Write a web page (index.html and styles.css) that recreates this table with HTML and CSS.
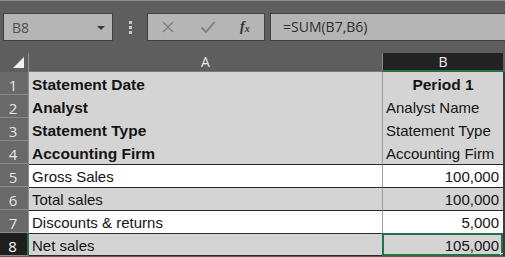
FILE: index.html
```html
<!DOCTYPE html>
<html lang="en">
<head>
<meta charset="utf-8">
<title>Income statement</title>
<link rel="stylesheet" href="styles.css">
</head>
<body>
<div class="app">
  <div class="formula-bar">
    <div class="name-box">
      <span class="name-text">B8</span>
      <span class="caret"></span>
    </div>
    <div class="grip"><i></i><i></i><i></i></div>
    <div class="fx-buttons">
      <svg class="btn-icon" width="14" height="14" viewBox="0 0 14 14"><path d="M2 2 L12 12 M12 2 L2 12" stroke="#7d7d7d" stroke-width="1.4" fill="none"/></svg>
      <svg class="btn-icon" width="16" height="14" viewBox="0 0 16 14"><path d="M1.5 7.5 L6 12 L14.5 2" stroke="#7d7d7d" stroke-width="1.8" fill="none"/></svg>
      <span class="fx">f<sub>x</sub></span>
    </div>
    <div class="formula-input">=SUM(B7,B6)</div>
  </div>

  <div class="sheet">
    <div class="corner"><span class="corner-tri"></span></div>
    <div class="col-head">A</div>
    <div class="col-head col-active">B</div>
    <div class="edge-head"></div>

    <div class="row-head">1</div>
    <div class="cell a bold">Statement Date</div>
    <div class="cell b bold center">Period 1</div>
    <div class="edge"></div>

    <div class="row-head">2</div>
    <div class="cell a bold">Analyst</div>
    <div class="cell b">Analyst Name</div>
    <div class="edge"></div>

    <div class="row-head">3</div>
    <div class="cell a bold">Statement Type</div>
    <div class="cell b">Statement Type</div>
    <div class="edge"></div>

    <div class="row-head">4</div>
    <div class="cell a bold">Accounting Firm</div>
    <div class="cell b">Accounting Firm</div>
    <div class="edge"></div>

    <div class="row-head">5</div>
    <div class="cell a lined white">Gross Sales</div>
    <div class="cell b lined white num">100,000</div>
    <div class="edge"></div>

    <div class="row-head">6</div>
    <div class="cell a lined">Total sales</div>
    <div class="cell b lined num">100,000</div>
    <div class="edge"></div>

    <div class="row-head">7</div>
    <div class="cell a lined white">Discounts &amp; returns</div>
    <div class="cell b lined white num">5,000</div>
    <div class="edge"></div>

    <div class="row-head row-active">8</div>
    <div class="cell a lined last">Net sales</div>
    <div class="cell b lined last num selected">105,000<span class="fill-handle"></span></div>
    <div class="edge"></div>
  </div>
</div>
</body>
</html>
```

FILE: styles.css
```css
* {
  box-sizing: border-box;
}

html, body {
  margin: 0;
  padding: 0;
}

body {
  width: 505px;
  height: 257px;
  overflow: hidden;
  background: #5e5e5e;
  font-family: "Liberation Sans", Arial, sans-serif;
}

.app {
  border-top: 1px solid #8e8e8e;
  height: 257px;
  overflow: hidden;
}

/* ---------- formula bar ---------- */
.formula-bar {
  display: flex;
  align-items: stretch;
  height: 28px;
  margin-top: 12px;
  padding-left: 3px;
}

.name-box {
  width: 110px;
  background: #b5b5b5;
  border: 1px solid #414141;
  display: flex;
  align-items: center;
  justify-content: space-between;
  padding: 0 7px 0 8px;
}

.name-text {
  font-family: "Open Sans", sans-serif;
  font-size: 14px;
  color: #505050;
}

.caret {
  width: 0;
  height: 0;
  border-left: 4px solid transparent;
  border-right: 4px solid transparent;
  border-top: 4px solid #3a3a3a;
  margin-top: 1px;
}

.grip {
  width: 34px;
  display: flex;
  flex-direction: column;
  align-items: center;
  justify-content: center;
  gap: 2px;
}

.grip i {
  display: block;
  width: 3px;
  height: 3px;
  background: #c8c8c8;
}

.fx-buttons {
  width: 118px;
  background: #b5b5b5;
  border: 1px solid #414141;
  display: flex;
  align-items: center;
  padding-left: 13px;
}

.fx-buttons .btn-icon:first-child {
  margin-left: 0;
}

.fx-buttons .btn-icon + .btn-icon {
  margin-left: 25px;
}

.fx {
  margin-left: 24px;
  font-family: "Liberation Serif", "Times New Roman", serif;
  font-style: italic;
  font-weight: bold;
  font-size: 14px;
  color: #333;
  line-height: 1;
}

.fx sub {
  font-size: 10px;
  vertical-align: -1px;
}

.formula-input {
  flex: 1;
  margin-left: 5px;
  background: #b5b5b5;
  border: 1px solid #414141;
  border-right: none;
  font-family: "Open Sans", sans-serif;
  font-size: 14px;
  color: #2e2e2e;
  display: flex;
  align-items: center;
  padding-left: 12px;
  padding-bottom: 1px;
}

/* ---------- sheet grid ---------- */
.sheet {
  margin-top: 12px;
  display: grid;
  grid-template-columns: 29px 353px 121px 2px;
  grid-template-rows: 19px repeat(8, 23px) 10px;
}

.corner {
  border-right: 1px solid #8c8c8c;
  position: relative;
}

.corner-tri {
  position: absolute;
  right: 4px;
  bottom: 4px;
  width: 0;
  height: 0;
  border-left: 11px solid transparent;
  border-bottom: 11px solid #f2f2f2;
}

.col-head {
  font-family: "Open Sans", sans-serif;
  font-size: 14px;
  color: #e8e8e8;
  text-align: center;
  line-height: 18px;
  border-bottom: 1px solid #7a7a7a;
  background: #5e5e5e;
}

.col-active {
  background: #222;
  color: #f4f4f4;
  border-bottom: 2px solid #217346;
  border-left: 1px solid #888;
  line-height: 17px;
}

.edge-head {
  background: #5e5e5e;
}

.row-head {
  background: #696969;
  color: #e6e6e6;
  font-family: "Open Sans", sans-serif;
  font-size: 15px;
  text-align: center;
  line-height: 22px;
  padding-top: 2px;
  padding-right: 2px;
  border-bottom: 1px solid #8a8a8a;
  border-right: 1px solid #8c8c8c;
}

.row-active {
  background: #1f1f1f;
  color: #fafafa;
  border-right: 2px solid #217346;
}

.cell {
  background: #d4d4d4;
  color: #141414;
  font-size: 15px;
  line-height: 21px;
  padding: 2px 3px 0 3px;
  white-space: nowrap;
  overflow: hidden;
}

.cell.b {
  border-left: 1px solid #9c9c9c;
  padding-left: 3px;
}

.bold {
  font-weight: bold;
  font-size: 15.5px;
}

.center {
  text-align: center;
}

.num {
  text-align: right;
  padding-right: 4px;
}

.lined {
  border-top: 1px solid #2a2a2a;
  line-height: 20px;
}

.lined.last {
  border-bottom: 1px solid #2a2a2a;
  line-height: 19px;
}

.white {
  background: #ffffff;
}

.edge {
  background: #3a3a3a;
}

.selected {
  position: relative;
  outline: 2px solid #217346;
  outline-offset: -2px;
  border-left-color: transparent;
}

.fill-handle {
  position: absolute;
  right: -3px;
  bottom: -4px;
  width: 6px;
  height: 6px;
  background: #217346;
  border: 1px solid #fff;
}
```
